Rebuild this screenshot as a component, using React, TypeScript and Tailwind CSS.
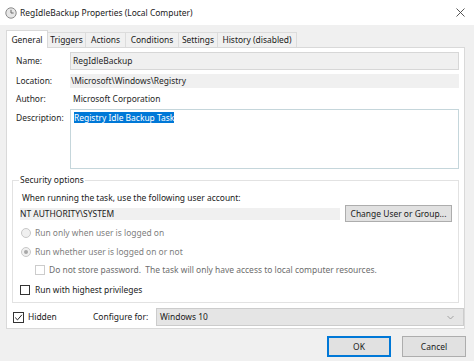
import React from "react";

function Tab({ label, w, selected }: { label: string; w: number; selected?: boolean }) {
  if (selected) {
    return (
      <div
        className="relative z-10 h-[18px] -mb-px bg-white border border-b-0 border-[#d9d9d9] flex items-center justify-center text-[#1a1a1a]"
        style={{ width: w }}
      >
        {label}
      </div>
    );
  }
  return (
    <div
      className="h-[15px] -ml-px bg-[#f0f0f0] border border-b-0 border-[#dcdcdc] flex items-center justify-center text-[#1a1a1a]"
      style={{ width: w }}
    >
      {label}
    </div>
  );
}

function Radio({ checked }: { checked?: boolean }) {
  return (
    <div className="w-[10px] h-[10px] rounded-full border border-[#c8c8c8] bg-[#f0f0f0] flex items-center justify-center">
      {checked ? <div className="w-[4px] h-[4px] rounded-full bg-[#a8a8a8]" /> : null}
    </div>
  );
}

export default function App() {
  return (
    <div className="w-[474px] h-[361px] bg-[#f0f0f0] flex flex-col overflow-hidden text-[8.45px] leading-[12px] text-[#262626] font-['Noto_Sans','Open_Sans',sans-serif]">
      {/* Title bar */}
      <div className="h-[25px] bg-white flex items-center pl-[5px] pr-[9px] shrink-0">
        <svg width="12" height="12" viewBox="0 0 12 12" className="shrink-0">
          <circle cx="6" cy="6" r="5.2" fill="#e6e6e6" stroke="#8a8a8a" strokeWidth="1" />
          <path d="M6 2.8 V6 H8.6" fill="none" stroke="#6a6a6a" strokeWidth="1" />
        </svg>
        <span className="ml-[3px] text-[#1a1a1a]">RegIdleBackup Properties (Local Computer)</span>
        <div className="flex-1" />
        <svg width="9" height="9" viewBox="0 0 9 9">
          <path d="M0.5 0.5 L8.5 8.5 M8.5 0.5 L0.5 8.5" stroke="#444" strokeWidth="0.9" />
        </svg>
      </div>

      {/* Tabs */}
      <div className="mt-[5px] ml-[6px] h-[17px] flex items-end shrink-0">
        <Tab label="General" w={42} selected />
        <Tab label="Triggers" w={39} />
        <Tab label="Actions" w={41} />
        <Tab label="Conditions" w={54} />
        <Tab label="Settings" w={40} />
        <Tab label="History (disabled)" w={80} />
      </div>

      {/* Panel */}
      <div className="ml-[6px] w-[459px] h-[282px] bg-white border border-[#d9d9d9] flex flex-col pl-[5px] pr-[5px] shrink-0">
        {/* Name */}
        <div className="mt-[4px] h-[18px] flex items-center pl-[4px]">
          <div className="w-[54px]">Name:</div>
          <div className="flex-1 h-full bg-[#f0f0f0] border border-[#d7d7d7] pl-[2px] flex items-center">
            RegIdleBackup
          </div>
        </div>
        {/* Location */}
        <div className="mt-[4px] h-[14px] flex items-center pl-[4px]">
          <div className="w-[54px]">Location:</div>
          <div className="flex-1 h-full bg-[#f0f0f0] pl-[1px] flex items-center">
            \Microsoft\Windows\Registry
          </div>
        </div>
        {/* Author */}
        <div className="mt-[4px] h-[14px] flex items-center pl-[4px]">
          <div className="w-[54px]">Author:</div>
          <div className="flex-1 pl-[3px]">Microsoft Corporation</div>
        </div>
        {/* Description */}
        <div className="mt-[3px] h-[60px] flex items-start pl-[4px]">
          <div className="w-[54px] pt-[3px]">Description:</div>
          <div className="flex-1 h-full border border-[#c5d6db] bg-white pl-[3px] pt-[2px]">
            <span className="bg-[#0078d7] text-white">Registry Idle Backup Task</span>
          </div>
        </div>

        {/* Security options */}
        <fieldset className="mt-[5px] border border-[#e2e2e2] pl-[6px] pr-[6px] pb-[6px]">
          <legend className="px-[1px] text-[#1a1a1a]">Security options</legend>
          <div className="mt-[6px] h-[12px] pl-[3px] text-[#1a1a1a]">
            When running the task, use the following user account:
          </div>
          <div className="mt-[1px] h-[17px] flex items-center">
            <div className="ml-[1px] w-[320px] h-[12px] bg-[#f0f0f0] flex items-center text-[#1a1a1a]">
              NT AUTHORITY\SYSTEM
            </div>
            <div className="ml-[5px] w-[107px] h-[17px] bg-[#e1e1e1] border border-[#adadad] flex items-center justify-center text-[#1a1a1a]">
              Change User or Group...
            </div>
          </div>
          <div className="mt-[5px] h-[12px] flex items-center ml-[2px] text-[#808080]">
            <Radio />
            <span className="ml-[4px]">Run only when user is logged on</span>
          </div>
          <div className="mt-[7px] h-[12px] flex items-center ml-[2px] text-[#808080]">
            <Radio checked />
            <span className="ml-[4px]">Run whether user is logged on or not</span>
          </div>
          <div className="mt-[6px] h-[12px] flex items-center ml-[16px] text-[#6d6d6d]">
            <div className="w-[10px] h-[10px] border border-[#cccccc] bg-white" />
            <span className="ml-[4px]">
              Do not store password.&nbsp; The task will only have access to local computer resources.
            </span>
          </div>
          <div className="mt-[8px] h-[12px] flex items-center ml-[1px] text-[#1a1a1a]">
            <div className="w-[10px] h-[10px] border border-[#333333] bg-white" />
            <span className="ml-[5px]">Run with highest privileges</span>
          </div>
        </fieldset>

        {/* Hidden / Configure for */}
        <div className="mt-[5px] h-[18px] flex items-center text-[#1a1a1a]">
          <div className="w-[81px] flex items-center">
            <div className="ml-[1px] w-[11px] h-[11px] border border-[#333333] bg-white flex items-center justify-center">
              <svg width="9" height="9" viewBox="0 0 9 9">
                <path d="M1.2 4.6 L3.5 6.9 L7.9 1.8" fill="none" stroke="#222" strokeWidth="1" />
              </svg>
            </div>
            <span className="ml-[4px]">Hidden</span>
          </div>
          <div className="w-[63px]">Configure for:</div>
          <div className="flex-1 -mr-[5px] h-full bg-[#e5e5e5] border border-[#cccccc] flex items-center pl-[3px]">
            <span className="flex-1">Windows 10</span>
            <svg width="7" height="5" viewBox="0 0 7 5" className="mr-[9px]">
              <path d="M0.5 1 L3.5 4 L6.5 1" fill="none" stroke="#9a9a9a" strokeWidth="0.9" />
            </svg>
          </div>
        </div>
      </div>

      {/* Buttons */}
      <div className="mt-[7px] flex justify-end pr-[8px] gap-[11px] shrink-0 text-[#1a1a1a]">
        <div className="w-[64px] h-[21px] bg-[#e1e1e1] border-2 border-[#0078d7] flex items-center justify-center">
          OK
        </div>
        <div className="w-[64px] h-[21px] bg-[#e1e1e1] border border-[#adadad] flex items-center justify-center">
          Cancel
        </div>
      </div>
    </div>
  );
}
